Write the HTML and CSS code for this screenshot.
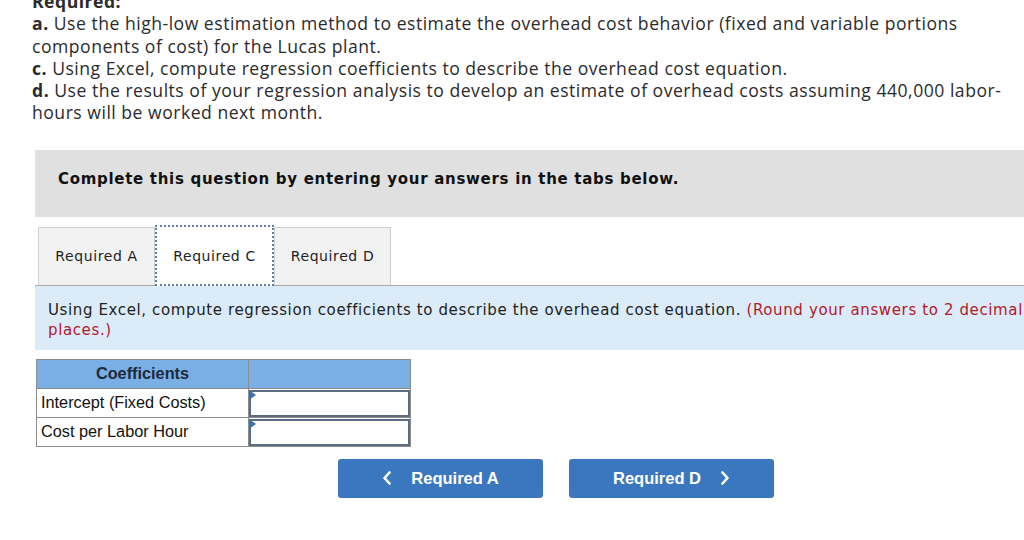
FILE: index.html
```html
<!DOCTYPE html>
<html>
<head>
<meta charset="utf-8">
<link rel="stylesheet" href="styles.css">
</head>
<body>
<div class="page">
  <div class="required">
    <div class="req-title">Required:</div>
    <div><b>a.</b> Use the high-low estimation method to estimate the overhead cost behavior (fixed and variable portions components of cost) for the Lucas plant.</div>
    <div><b>c.</b> Using Excel, compute regression coefficients to describe the overhead cost equation.</div>
    <div><b>d.</b> Use the results of your regression analysis to develop an estimate of overhead costs assuming 440,000 labor-hours will be worked next month.</div>
  </div>

  <div class="instructions">Complete this question by entering your answers in the tabs below.</div>

  <div class="tabs">
    <div class="tab">Required A</div>
    <div class="tab active">Required C</div>
    <div class="tab">Required D</div>
  </div>

  <div class="prompt">Using Excel, compute regression coefficients to describe the overhead cost equation. <span class="note">(Round your answers to 2 decimal places.)</span></div>

  <table class="coef">
    <tr><th class="label-col">Coefficients</th><th class="val-col"></th></tr>
    <tr><td>Intercept (Fixed Costs)</td><td class="input-cell"><div class="input"></div></td></tr>
    <tr><td>Cost per Labor Hour</td><td class="input-cell"><div class="input"></div></td></tr>
  </table>

  <div class="nav">
    <button class="btn"><svg class="chev" width="10" height="14" viewBox="0 0 10 14"><polyline points="7.5,1.5 2.5,7 7.5,12.5" fill="none" stroke="#fff" stroke-width="2.6" stroke-linecap="round" stroke-linejoin="round"/></svg>Required A</button>
    <button class="btn">Required D<svg class="chev right" width="10" height="14" viewBox="0 0 10 14"><polyline points="2.5,1.5 7.5,7 2.5,12.5" fill="none" stroke="#fff" stroke-width="2.6" stroke-linecap="round" stroke-linejoin="round"/></svg></button>
  </div>
</div>
</body>
</html>
```

FILE: styles.css
```css
html, body {
  margin: 0;
  padding: 0;
  background: #ffffff;
  overflow: hidden;
}
.page {
  width: 1024px;
  height: 540px;
  overflow: hidden;
}
.required {
  margin-top: -10px;
  padding: 0 6px 0 32px;
  font-family: "Open Sans", "Liberation Sans", sans-serif;
  font-size: 17.6px;
  letter-spacing: 0.5px;
  line-height: 22.3px;
  color: #2b2b2b;
}
.required b { font-weight: 700; }
.req-title { font-weight: 700; }
.instructions {
  margin: 26px 0 0 35px;
  height: 67px;
  box-sizing: border-box;
  padding: 20px 0 0 23px;
  background: #e0e0e0;
  font-family: "DejaVu Sans", Verdana, sans-serif;
  font-weight: 700;
  font-size: 15px;
  letter-spacing: 0.7px;
  line-height: 18px;
  color: #111;
}
.tabs {
  display: flex;
  margin: 10px 0 0 35px;
  padding-left: 3px;
  border-bottom: 1px solid #a9a9a9;
  height: 58px;
  align-items: flex-end;
}
.tab {
  box-sizing: border-box;
  height: 58px;
  display: flex;
  align-items: center;
  justify-content: center;
  padding-top: 0;
  background: #f2f2f2;
  border: 1px solid #cfcfcf;
  border-bottom: none;
  font-family: "DejaVu Sans", Verdana, sans-serif;
  font-size: 14px;
  letter-spacing: 0.6px;
  color: #222;
}
.tab:first-child { width: 117px; }
.tab.active {
  width: 119px;
  height: 61px;
  padding-top: 2px;
  background: #ffffff;
  border: 2px dotted #5f7fa6;
  margin-bottom: -1px;
}
.tab:last-child { width: 117px; }
.prompt {
  margin-left: 35px;
  width: 1040px;
  height: 64px;
  box-sizing: border-box;
  padding: 14px 0 0 13px;
  background: #dcebf8;
  font-family: "DejaVu Sans", Verdana, sans-serif;
  font-size: 15px;
  letter-spacing: 0.62px;
  line-height: 20px;
  color: #222;
}
.prompt .note {
  color: #b0192a;
}
.coef {
  margin: 9px 0 0 36px;
  border-collapse: collapse;
  font-family: "Liberation Sans", Arial, sans-serif;
  font-size: 16.3px;
  color: #111;
}
.coef th, .coef td {
  border: 1px solid #8c8c8c;
  padding: 0;
}
.coef th {
  background: #7aafe6;
  height: 28px;
  font-weight: 700;
  color: #1d2a3a;
}
.label-col { width: 211px; }
.val-col { width: 161px; }
.coef td {
  height: 27px;
  padding-left: 4px;
  text-align: left;
}
.coef td.input-cell {
  padding: 0;
  position: relative;
}
.input {
  box-sizing: border-box;
  height: 27px;
  margin: 1px 0 0 0;
  border: 2px solid #5b6c84;
  background: #fff;
}
.input-cell::before {
  content: "";
  position: absolute;
  left: 0;
  top: 1px;
  border-left: 7px solid #3f6fb0;
  border-top: 5px solid transparent;
  border-bottom: 5px solid transparent;
}
.nav {
  display: flex;
  gap: 26px;
  margin: 12px 0 0 338px;
}
.btn {
  width: 205px;
  height: 39px;
  border: none;
  border-radius: 3px;
  background: #3b77be;
  color: #fff;
  font-family: "Liberation Sans", Arial, sans-serif;
  font-weight: 700;
  font-size: 16.5px;
  display: flex;
  align-items: center;
  justify-content: center;
  padding: 0;
}
.chev {
  margin-right: 19px;
}
.chev.right {
  margin-right: 0;
  margin-left: 19px;
}
```
